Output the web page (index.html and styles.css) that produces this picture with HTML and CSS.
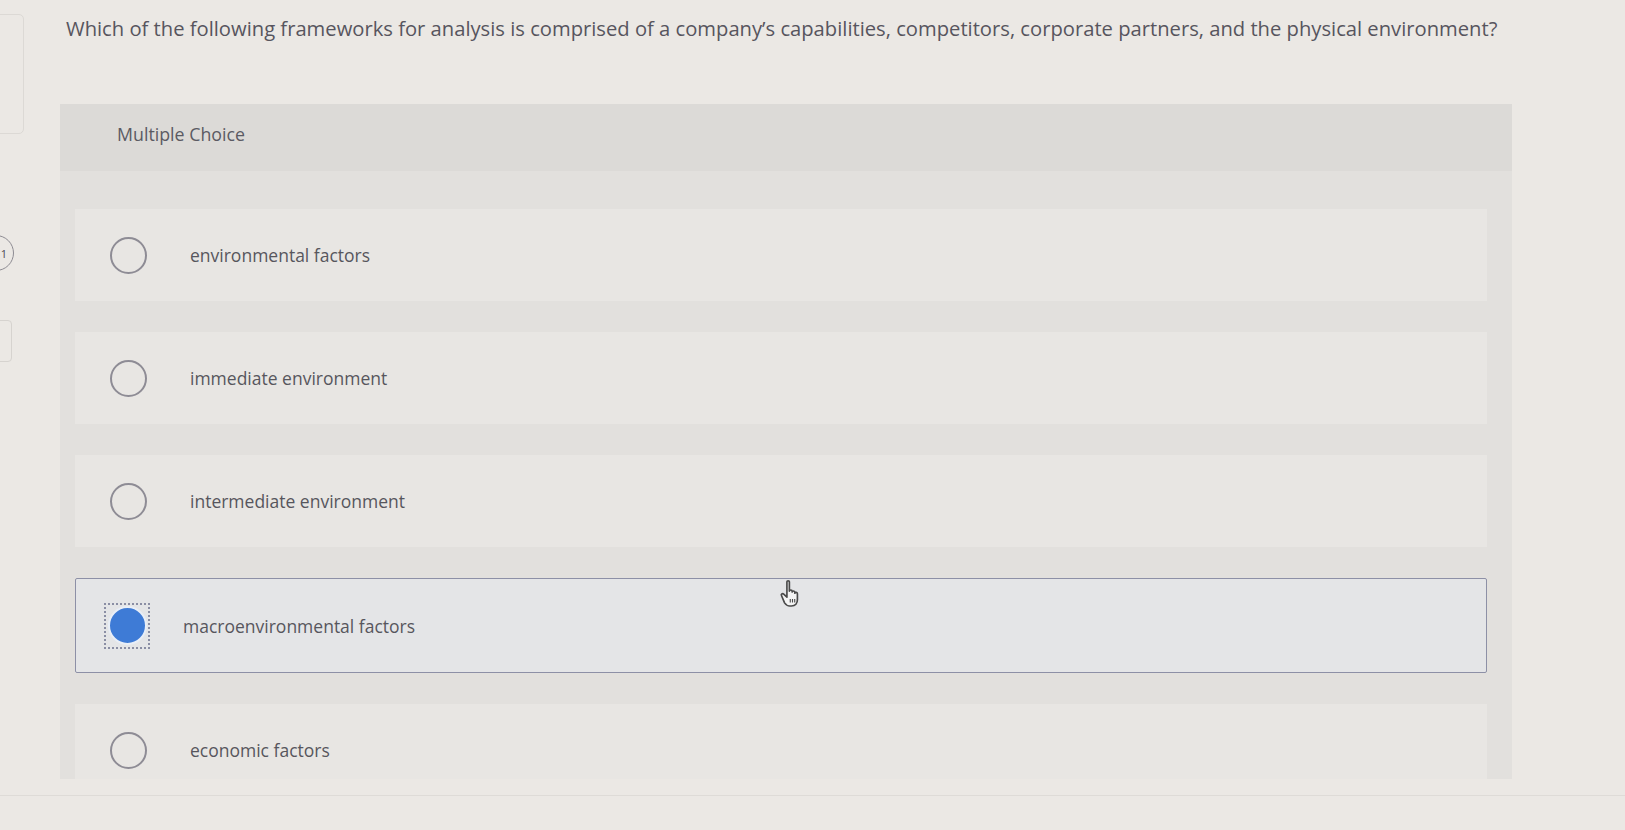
FILE: index.html
```html
<!DOCTYPE html>
<html lang="en">
<head>
<meta charset="utf-8">
<title>Multiple Choice</title>
<link rel="stylesheet" href="styles.css">
</head>
<body>
<div class="sidebar-stub">
  <div class="stub-box"></div>
  <div class="stub-circle">1</div>
  <div class="stub-box2"></div>
</div>
<main class="page">
  <p class="question">Which of the following frameworks for analysis is comprised of a company’s capabilities, competitors, corporate partners, and the physical environment?</p>
  <section class="panel">
    <header class="panel-head">Multiple Choice</header>
    <div class="options">
      <label class="option"><span class="radio"></span><span class="label">environmental factors</span></label>
      <label class="option"><span class="radio"></span><span class="label">immediate environment</span></label>
      <label class="option"><span class="radio"></span><span class="label">intermediate environment</span></label>
      <label class="option selected"><span class="focus"><span class="radio filled"></span></span><span class="label">macroenvironmental factors</span>
        <svg class="cursor" width="27" height="29" viewBox="0 0 24 26"><path d="M7 2.5c0-1.2 2.2-1.2 2.2 0v8.3c.3-1.3 2.4-1.3 2.5.2v.6c.3-1.2 2.4-1.1 2.4.4v.7c.4-1.1 2.3-1 2.3.5v5.5c0 3-1.8 5.5-5.3 5.5h-1.6c-2.2 0-3.4-1-4.6-2.8L2.2 15c-.8-1.2.8-2.5 1.9-1.5L7 16.3z" fill="#f4f4f4" stroke="#4a4a4a" stroke-width="1.5" stroke-linejoin="round"/><path d="M10 18v3M12 18v3M14 18v3" stroke="#4a4a4a" stroke-width="1"/></svg>
      </label>
      <label class="option"><span class="radio"></span><span class="label">economic factors</span></label>
    </div>
  </section>
  <div class="footer-line"></div>
</main>
</body>
</html>
```

FILE: styles.css
```css
html, body {
  margin: 0;
  padding: 0;
}
body {
  width: 1625px;
  height: 830px;
  overflow: hidden;
  background: #ebe8e4;
  font-family: "Open Sans", "Lato", sans-serif;
  color: #56555c;
  position: relative;
}
.sidebar-stub {
  position: absolute;
  left: 0;
  top: 0;
  width: 30px;
  height: 400px;
}
.stub-box {
  position: absolute;
  left: -20px;
  top: 14px;
  width: 42px;
  height: 118px;
  border: 1.5px solid #dcd9d5;
  border-radius: 5px;
}
.stub-circle {
  position: absolute;
  left: -22px;
  top: 235px;
  width: 36px;
  height: 36px;
  border: 1.5px solid #8d8b92;
  border-radius: 50%;
  font-size: 11px;
  line-height: 36px;
  text-align: right;
  padding-right: 6px;
  box-sizing: border-box;
  color: #4b4a55;
}
.stub-box2 {
  position: absolute;
  left: -20px;
  top: 320px;
  width: 30px;
  height: 40px;
  border: 1.5px solid #d6d3cf;
  border-radius: 4px;
}
.page {
  padding: 14px 0 0 60px;
}
.question {
  margin: 0 0 0 6px;
  font-size: 20.2px;
  line-height: 28px;
  color: #57555e;
}
.panel {
  margin-top: 62px;
  width: 1452px;
  height: 675px;
  background: #e2e0dd;
  overflow: hidden;
}
.panel-head {
  height: 67px;
  background: #dcdad7;
  padding-left: 57px;
  font-size: 17.8px;
  line-height: 60px;
  color: #5b5a63;
}
.options {
  padding: 38px 0 0 15px;
  display: flex;
  flex-direction: column;
  gap: 31px;
}
.option {
  position: relative;
  width: 1412px;
  height: 92px;
  box-sizing: border-box;
  background: #e8e6e3;
  display: flex;
  align-items: center;
  padding-left: 35px;
  font-size: 17.5px;
  color: #57565d;
}
.radio {
  width: 37px;
  height: 37px;
  box-sizing: border-box;
  border: 2px solid #8e8c95;
  border-radius: 50%;
  flex: none;
  margin-right: 43px;
}
.selected {
  height: 95px;
  background: #e4e5e7;
  border: 1.5px solid #8d90a6;
  border-radius: 2px;
  padding-left: 28px;
}
.focus {
  width: 46px;
  height: 46px;
  box-sizing: border-box;
  border: 2px dotted #8a8ea4;
  display: flex;
  align-items: center;
  justify-content: center;
  margin-right: 33px;
  flex: none;
}
.radio.filled {
  width: 39px;
  height: 39px;
  margin: 0;
  border: 2px solid #e8eef7;
  background: #3e7bd6;
}
.label {
  white-space: nowrap;
}
.cursor {
  position: absolute;
  left: 703px;
  top: 0;
}
.footer-line {
  margin: 16px 0 0 -60px;
  height: 1px;
  background: #dedbd7;
}
```
